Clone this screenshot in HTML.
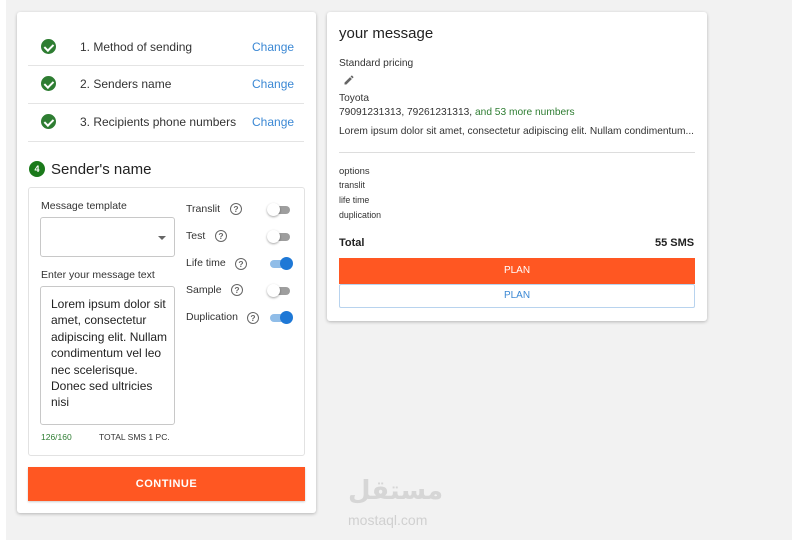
<!DOCTYPE html>
<html><head><meta charset="utf-8"><style>
*{box-sizing:border-box;margin:0;padding:0}
body{width:792px;height:540px;background:#fff;font-family:"Liberation Sans",Arial,sans-serif;color:#222;position:relative;overflow:hidden}
.bg{position:absolute;left:6px;top:0;right:0;bottom:0;background:#f2f2f2}
.card{position:absolute;background:#fff;border-radius:3px;box-shadow:0 1px 3px rgba(0,0,0,.25)}
.a{position:absolute;white-space:nowrap}
.chk{position:absolute;width:15px;height:15px;border-radius:50%;background:#2e7d32}
.chk:after{content:"";position:absolute;left:5px;top:2.5px;width:3.5px;height:7px;border:solid #fff;border-width:0 2px 2px 0;transform:rotate(45deg)}
.row{position:absolute;left:28px;width:276px;height:1px;background:#e4e4e4}
.step{font-size:12px;color:#333}
.chg{font-size:12px;color:#3b88d4}
.lbl{font-size:10.5px;color:#333}
.q{position:absolute;width:12px;height:12px;border:1.3px solid #666;border-radius:50%;font-size:8.5px;text-align:center;line-height:10px;color:#666;font-weight:bold}
.tg{position:absolute;width:20px;height:8px;border-radius:4px}
.tg.off{background:#9e9e9e}.tg.on{background:#90bde8}
.tg i{position:absolute;top:-3px;width:13px;height:13px;border-radius:50%}
.tg.off i{left:-3px;background:#fff;box-shadow:0 1px 2px rgba(0,0,0,.35)}
.tg.on i{right:-3px;background:#1e78d6}
</style></head><body>
<div class="bg"></div>
<div class="card" style="left:17px;top:12px;width:299px;height:501px"></div>
<div class="chk" style="left:41px;top:39px"></div>
<div class="a step" style="left:80px;top:40px">1. Method of sending</div>
<div class="a chg" style="left:252px;top:40px">Change</div>
<div class="row" style="top:65px"></div>
<div class="chk" style="left:41px;top:76px"></div>
<div class="a step" style="left:80px;top:77px">2. Senders name</div>
<div class="a chg" style="left:252px;top:77px">Change</div>
<div class="row" style="top:103px"></div>
<div class="chk" style="left:41px;top:114px"></div>
<div class="a step" style="left:80px;top:115px">3. Recipients phone numbers</div>
<div class="a chg" style="left:252px;top:115px">Change</div>
<div class="row" style="top:141px"></div>
<div class="a" style="left:29px;top:161px;width:16px;height:16px;border-radius:50%;background:#1b7a1b;color:#fff;font-size:9px;font-weight:bold;text-align:center;line-height:16px">4</div>
<div class="a" style="left:51px;top:161px;font-size:15px;color:#222">Sender's name</div>
<div class="a" style="left:28px;top:187px;width:277px;height:269px;border:1px solid #e2e2e2;border-radius:3px"></div>
<div class="a lbl" style="left:41px;top:200px">Message template</div>
<div class="a" style="left:40px;top:217px;width:135px;height:40px;border:1px solid #c8c8c8;border-radius:3px"></div>
<div class="a" style="left:158px;top:236px;width:0;height:0;border-left:4px solid transparent;border-right:4px solid transparent;border-top:4px solid #666"></div>
<div class="a lbl" style="left:41px;top:269px">Enter your message text</div>
<div class="a" style="left:40px;top:286px;width:135px;height:139px;border:1px solid #c8c8c8;border-radius:3px;padding:9px 0 0 10px;font-size:12px;line-height:16.4px;color:#222">Lorem ipsum dolor sit<br>amet, consectetur<br>adipiscing elit. Nullam<br>condimentum vel leo<br>nec scelerisque.<br>Donec sed ultricies<br>nisi</div>
<div class="a" style="left:41px;top:432px;font-size:8.5px;color:#2e7d32">126/160</div>
<div class="a" style="left:99px;top:432px;font-size:8.5px;color:#333">TOTAL SMS 1 PC.</div>
<div class="a lbl" style="left:186px;top:203px">Translit</div><div class="q" style="left:230px;top:203px">?</div><div class="tg off" style="left:270px;top:206px"><i></i></div>
<div class="a lbl" style="left:186px;top:230px">Test</div><div class="q" style="left:215px;top:230px">?</div><div class="tg off" style="left:270px;top:233px"><i></i></div>
<div class="a lbl" style="left:186px;top:257px">Life time</div><div class="q" style="left:235px;top:258px">?</div><div class="tg on" style="left:270px;top:260px"><i></i></div>
<div class="a lbl" style="left:186px;top:284px">Sample</div><div class="q" style="left:231px;top:284px">?</div><div class="tg off" style="left:270px;top:287px"><i></i></div>
<div class="a lbl" style="left:186px;top:311px">Duplication</div><div class="q" style="left:247px;top:312px">?</div><div class="tg on" style="left:270px;top:314px"><i></i></div>
<div class="a" style="left:28px;top:467px;width:277px;height:34px;background:#ff5722;color:#fff;font-weight:bold;font-size:11px;text-align:center;line-height:34px;letter-spacing:.5px;box-shadow:0 1px 2px rgba(0,0,0,.2)">CONTINUE</div>

<div class="card" style="left:327px;top:12px;width:380px;height:309px"></div>
<div class="a" style="left:339px;top:25px;font-size:15px;color:#222">your message</div>
<div class="a" style="left:339px;top:58px;font-size:10.2px;color:#333">Standard pricing</div>
<svg class="a" style="left:343px;top:74px" width="12" height="12" viewBox="0 0 24 24"><path fill="#666" d="M3 17.25V21h3.75L17.8 9.94l-3.75-3.75L3 17.25zM20.7 7.04a1 1 0 0 0 0-1.41l-2.34-2.34a1 1 0 0 0-1.41 0l-1.83 1.83 3.75 3.75 1.83-1.83z"/></svg>
<div class="a" style="left:339px;top:93px;font-size:10.2px;color:#333">Toyota</div>
<div class="a" style="left:339px;top:107px;font-size:10.2px;color:#333">79091231313, 79261231313, <span style="color:#2e7d32">and 53 more numbers</span></div>
<div class="a" style="left:339px;top:126px;font-size:10.2px;color:#333">Lorem ipsum dolor sit amet, consectetur adipiscing elit. Nullam condimentum...</div>
<div class="a" style="left:339px;top:152px;width:356px;height:1px;background:#ddd"></div>
<div class="a" style="left:339px;top:166px;font-size:9.5px;color:#333">options</div>
<div class="a" style="left:339px;top:180px;font-size:8.8px;color:#333">translit</div>
<div class="a" style="left:339px;top:195px;font-size:8.8px;color:#333">life time</div>
<div class="a" style="left:339px;top:210px;font-size:8.8px;color:#333">duplication</div>
<div class="a" style="left:339px;top:237px;font-size:11px;font-weight:bold;color:#222">Total</div>
<div class="a" style="left:655px;top:237px;font-size:11px;font-weight:bold;color:#222">55 SMS</div>
<div class="a" style="left:339px;top:258px;width:356px;height:26px;background:#ff5722;color:#fff;font-size:10px;text-align:center;line-height:26px">PLAN</div>
<div class="a" style="left:339px;top:284px;width:356px;height:24px;border:1px solid #b8d3ee;border-radius:2px;color:#3b88d4;font-size:10px;text-align:center;line-height:22px">PLAN</div>

<div class="a" style="left:348px;top:476px;font-size:26px;font-weight:bold;color:#d6d6d6;font-family:'DejaVu Sans',sans-serif">مستقل</div>
<div class="a" style="left:348px;top:512px;font-size:14px;color:#d0d0d0">mostaql.com</div>
</body></html>
